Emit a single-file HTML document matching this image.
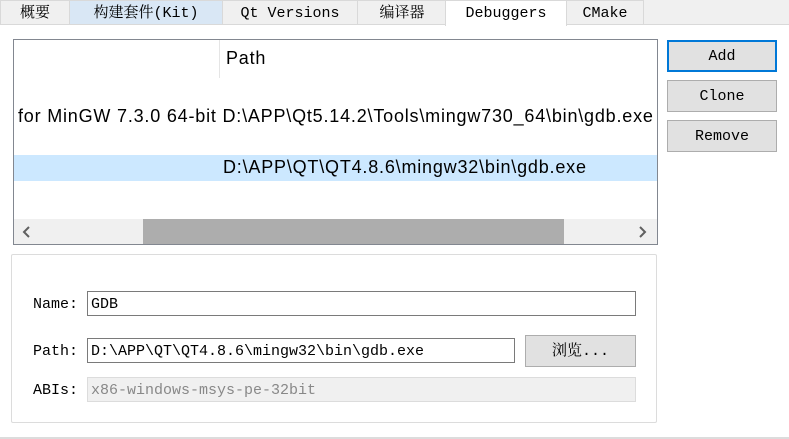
<!DOCTYPE html><html><head><meta charset="utf-8"><style>
*{box-sizing:border-box;margin:0;padding:0}
body{width:789px;height:439px;background:#fff;position:relative;overflow:hidden;font-family:"Liberation Mono","Noto Serif CJK SC",monospace;font-size:15px;color:#000}
.a{position:absolute}
.tab{position:absolute;top:0;height:24px;background:#f0f0f0;border:1px solid #d9d9d9;border-bottom:none;text-align:center;line-height:26px;font-size:15px}
.s{font-family:"Liberation Sans","Noto Sans CJK SC",sans-serif;font-size:18px;letter-spacing:0.8px;white-space:nowrap}
.btn{position:absolute;background:#e1e1e1;border:1px solid #adadad;text-align:center}
.in{position:absolute;border:1px solid #7a7a7a;background:#fff;padding-left:3px;white-space:nowrap;line-height:25px}
</style></head><body>
<div class="a" style="left:0;top:0;width:789px;height:25px;background:#f0f0f0;border-bottom:1px solid #d9d9d9"></div>
<div class="tab" style="left:0;width:70px">概要</div>
<div class="tab" style="left:69px;width:154px;background:#d9e7f5">构建套件(Kit)</div>
<div class="tab" style="left:222px;width:136px">Qt Versions</div>
<div class="tab" style="left:357px;width:90px">编译器</div>
<div class="tab" style="left:445px;width:122px;background:#fff;height:26px;border-color:#d9d9d9">Debuggers</div>
<div class="tab" style="left:566px;width:78px">CMake</div>

<div class="a" style="left:13px;top:39px;width:645px;height:206px;border:1px solid #828790;overflow:hidden">
<div class="a" style="left:205px;top:0;width:1px;height:38px;background:#e5e5e5"></div>
<div class="a s" style="left:212px;top:8px">Path</div>
<div class="a s" style="left:4px;top:66px">for MinGW 7.3.0 64-bit D:\APP\Qt5.14.2\Tools\mingw730_64\bin\gdb.exe</div>
<div class="a" style="left:0;top:115px;width:645px;height:26px;background:#cce8ff"></div>
<div class="a s" style="left:209px;top:117px">D:\APP\QT\QT4.8.6\mingw32\bin\gdb.exe</div>
<div class="a" style="left:0;top:179px;width:645px;height:25px;background:#f0f0f0"></div>
<div class="a" style="left:129px;top:179px;width:421px;height:25px;background:#adadad"></div>
<svg class="a" style="left:8px;top:186px" width="10" height="12"><path d="M7 1 L2 6 L7 11" stroke="#606060" stroke-width="2" fill="none"/></svg>
<svg class="a" style="left:623px;top:186px" width="10" height="12"><path d="M3 1 L8 6 L3 11" stroke="#606060" stroke-width="2" fill="none"/></svg>
</div>

<div class="btn" style="left:667px;top:40px;width:110px;height:32px;border:2px solid #0078d7;line-height:30px">Add</div>
<div class="btn" style="left:667px;top:80px;width:110px;height:32px;line-height:32px">Clone</div>
<div class="btn" style="left:667px;top:120px;width:110px;height:32px;line-height:32px">Remove</div>

<div class="a" style="left:11px;top:254px;width:646px;height:169px;border:1px solid #dcdcdc;border-radius:2px"></div>
<div class="a" style="left:33px;top:296px">Name:</div>
<div class="in" style="left:87px;top:291px;width:549px;height:25px">GDB</div>
<div class="a" style="left:33px;top:343px">Path:</div>
<div class="in" style="left:87px;top:338px;width:428px;height:25px">D:\APP\QT\QT4.8.6\mingw32\bin\gdb.exe</div>
<div class="btn" style="left:525px;top:335px;width:111px;height:32px;line-height:32px">浏览...</div>
<div class="a" style="left:33px;top:382px">ABIs:</div>
<div class="in" style="left:87px;top:377px;width:549px;height:25px;background:#f0f0f0;border-color:#dcdcdc;color:#888">x86-windows-msys-pe-32bit</div>
<div class="a" style="left:0;top:437px;width:789px;height:2px;background:#dcdcdc"></div>
</body></html>
